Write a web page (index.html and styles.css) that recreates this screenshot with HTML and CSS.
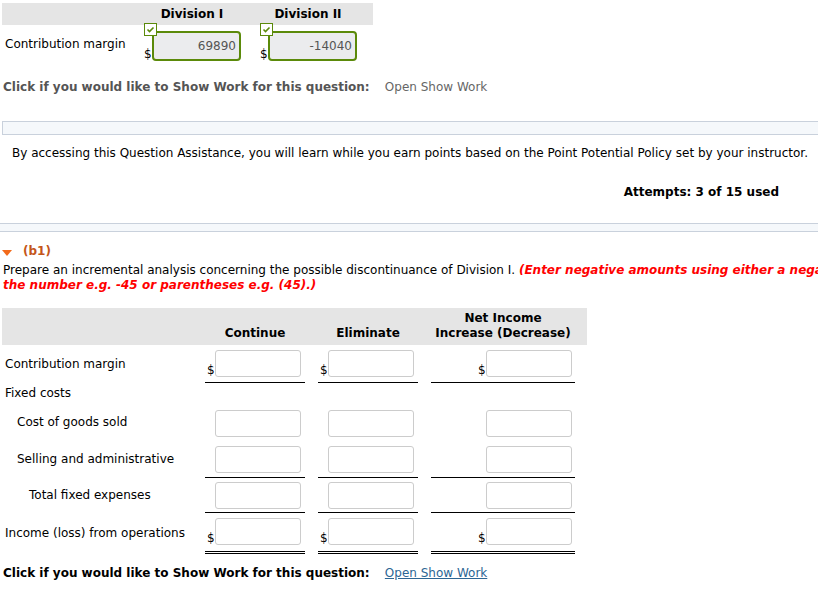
FILE: index.html
```html
<!DOCTYPE html>
<html lang="en">
<head>
<meta charset="utf-8">
<title>Incremental analysis</title>
<link rel="stylesheet" href="styles.css">
</head>
<body>
<div class="page">
  <div class="summary">
    <div class="sum-head">
      <span></span>
      <span class="sum-col">Division I</span>
      <span class="sum-col">Division II</span>
    </div>
    <div class="sum-row">
      <span class="sum-label">Contribution margin</span>
      <div class="sum-cell">
        <span class="check"><svg width="11" height="11" viewBox="0 0 11 11"><polyline points="2.5,5.5 4.5,7.5 8.5,3.5" fill="none" stroke="#5b8a0a" stroke-width="1.6"/></svg></span>
        <span class="dollar">$</span>
        <div class="answer">69890</div>
      </div>
      <div class="sum-cell">
        <span class="check"><svg width="11" height="11" viewBox="0 0 11 11"><polyline points="2.5,5.5 4.5,7.5 8.5,3.5" fill="none" stroke="#5b8a0a" stroke-width="1.6"/></svg></span>
        <span class="dollar">$</span>
        <div class="answer">-14040</div>
      </div>
    </div>
  </div>

  <p class="showwork showwork-muted">Click if you would like to Show Work for this question: <span class="sw-link sw-muted">Open Show Work</span></p>

  <div class="bar bar-first"></div>

  <p class="assist">By accessing this Question Assistance, you will learn while you earn points based on the Point Potential Policy set by your instructor.</p>

  <p class="attempts">Attempts: 3 of 15 used</p>

  <div class="bar bar-second"></div>

  <h3 class="part-title"><span class="tri"></span>(b1)</h3>
  <p class="prompt">Prepare an incremental analysis concerning the possible discontinuance of Division I. <em class="hint">(Enter negative amounts using either a negative sign preceding<br>the number e.g. -45 or parentheses e.g. (45).)</em></p>

  <div class="ledger">
    <div class="lrow lhead">
      <span></span>
      <span class="hcell">Continue</span>
      <span class="hcell">Eliminate</span>
      <span class="hcell">Net Income<br>Increase (Decrease)</span>
    </div>
    <div class="lrow r-cm">
      <span class="lab">Contribution margin</span>
      <div class="val c1"><span class="dollar">$</span><input class="box" type="text"></div>
      <div class="val c2"><span class="dollar">$</span><input class="box" type="text"></div>
      <div class="val c3"><span class="dollar">$</span><input class="box" type="text"></div>
    </div>
    <div class="lrow r-fc">
      <span class="lab">Fixed costs</span>
    </div>
    <div class="lrow r-cogs">
      <span class="lab ind1">Cost of goods sold</span>
      <div class="val c1"><input class="box" type="text"></div>
      <div class="val c2"><input class="box" type="text"></div>
      <div class="val c3"><input class="box" type="text"></div>
    </div>
    <div class="lrow r-sa">
      <span class="lab ind1">Selling and administrative</span>
      <div class="val c1"><input class="box" type="text"></div>
      <div class="val c2"><input class="box" type="text"></div>
      <div class="val c3"><input class="box" type="text"></div>
    </div>
    <div class="lrow r-tot">
      <span class="lab ind2">Total fixed expenses</span>
      <div class="val c1"><input class="box" type="text"></div>
      <div class="val c2"><input class="box" type="text"></div>
      <div class="val c3"><input class="box" type="text"></div>
    </div>
    <div class="lrow r-inc">
      <span class="lab">Income (loss) from operations</span>
      <div class="val c1"><span class="dollar">$</span><input class="box" type="text"></div>
      <div class="val c2"><span class="dollar">$</span><input class="box" type="text"></div>
      <div class="val c3"><span class="dollar">$</span><input class="box" type="text"></div>
    </div>
  </div>

  <p class="showwork showwork-bottom">Click if you would like to Show Work for this question: <a class="sw-link sw-active" href="#">Open Show Work</a></p>
</div>
</body>
</html>
```

FILE: styles.css
```css
html {
  overflow: hidden;
}
body {
  margin: 0;
  font-family: "DejaVu Sans", Verdana, sans-serif;
  font-size: 12px;
  line-height: 15px;
  color: #000;
  background: #fff;
}
.page {
  padding: 3px 0 0 2px;
}

/* summary table */
.summary {
  width: 371px;
}
.sum-head,
.sum-row {
  display: grid;
  grid-template-columns: 128px 108px 108px;
  column-gap: 8px;
  padding-right: 11px;
}
.sum-head {
  background: #e5e5e5;
  height: 22px;
  align-items: center;
}
.sum-col {
  font-weight: bold;
  text-align: center;
}
.sum-row {
  height: 38px;
  align-items: center;
}
.sum-label {
  padding-left: 3px;
  padding-top: 1px;
}
.sum-cell {
  position: relative;
  align-self: stretch;
  display: flex;
  align-items: flex-end;
  padding: 6px 0 2px 6px;
}
.check {
  position: absolute;
  left: 6px;
  top: -2px;
  width: 11px;
  height: 11px;
  border: 1px solid #5b8a0a;
  background: #fff;
  display: flex;
}
.dollar {
  line-height: 14px;
  width: 8px;
}
.answer {
  width: 89px;
  height: 30px;
  box-sizing: border-box;
  border: 2px solid #5b8a0a;
  border-radius: 4px;
  background: #ebecee;
  color: #555;
  text-align: right;
  line-height: 26px;
  padding-right: 3px;
}

/* show work */
.showwork {
  margin: 17px 0 0;
  padding-left: 1px;
  font-weight: bold;
}
.showwork-muted {
  color: #555;
}
.sw-link {
  font-weight: normal;
  margin-left: 11px;
}
.sw-muted {
  color: #666;
}
.sw-active {
  color: #2d6694;
  text-decoration: underline;
}
.showwork-bottom {
  margin-top: 12px;
}

/* bars */
.bar {
  background: #f5f8fb;
  border: 1px solid #c9d1dc;
  box-sizing: border-box;
}
.bar-first {
  margin: 26px -20px 0 0;
  height: 14px;
}
.bar-second {
  margin: 23px -20px 0 -2px;
  height: 9px;
  border-left: none;
}

.assist {
  margin: 11px 0 0;
  padding-left: 10px;
  white-space: nowrap;
}
.attempts {
  margin: 24px 0 0;
  font-weight: bold;
  text-align: right;
  padding-right: 39px;
}

/* part b1 */
.part-title {
  margin: 12px 0 0;
  font-size: 12px;
  line-height: 15px;
  font-weight: bold;
  color: #c4561a;
  display: flex;
  align-items: center;
}
.tri {
  width: 0;
  height: 0;
  border-left: 5px solid transparent;
  border-right: 5px solid transparent;
  border-top: 6px solid #f26a1b;
  margin: 2px 11px 0 0;
}
.prompt {
  margin: 4px 0 0;
  padding-left: 1px;
  white-space: nowrap;
}
.hint {
  color: #f00;
  font-weight: bold;
}

/* ledger */
.ledger {
  width: 585px;
  margin-top: 15px;
}
.lrow {
  display: grid;
  grid-template-columns: 190px 100px 100px 144px;
  column-gap: 13px;
  padding-right: 12px;
}
.lhead {
  background: #e5e5e5;
  height: 37px;
  align-items: end;
}
.hcell {
  font-weight: bold;
  text-align: center;
  padding-bottom: 4px;
}
.lab {
  padding-left: 3px;
  display: flex;
  align-items: center;
  white-space: nowrap;
}
.ind1 {
  padding-left: 15px;
}
.ind2 {
  padding-left: 27px;
}
.val {
  display: flex;
  justify-content: flex-end;
  align-items: flex-end;
}
.c1,
.c2 {
  padding-right: 4px;
}
.c3 {
  padding-right: 3px;
}
.box {
  width: 86px;
  height: 27px;
  box-sizing: border-box;
  border: 1px solid #ccc;
  border-radius: 3px;
  background: #fff;
  margin: 0;
  padding: 0 4px;
  font: inherit;
}
.r-cm .val {
  padding-top: 5px;
  padding-bottom: 5px;
  border-bottom: 1px solid #000;
}
.r-fc {
  height: 21px;
}
.r-cogs .val {
  padding-top: 6px;
  padding-bottom: 4px;
}
.r-sa .val {
  padding-top: 5px;
  padding-bottom: 4px;
  border-bottom: 1px solid #000;
}
.r-tot .val {
  padding-top: 4px;
  padding-bottom: 3px;
  border-bottom: 1px solid #000;
}
.r-inc .val {
  padding-top: 5px;
  padding-bottom: 6px;
  border-bottom: 3px double #000;
}
```
